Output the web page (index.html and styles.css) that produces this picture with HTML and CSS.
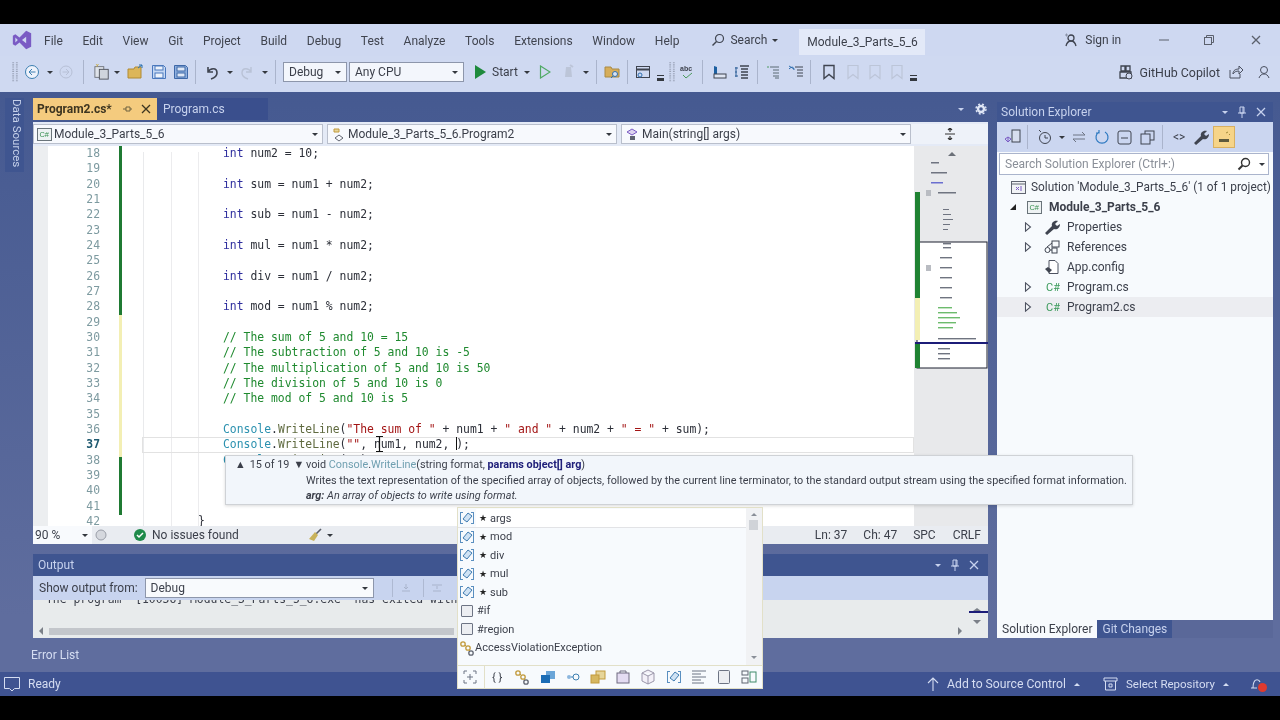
FILE: index.html
```html
<!DOCTYPE html>
<html lang="en">
<head>
    <meta charset="UTF-8">
    <title>Module_3_Parts_5_6 - Visual Studio</title>
    <link rel="stylesheet" href="styles.css">
</head>
<body>
    <!-- Shared toolbar icons -->
    <svg class="defs" width="0" height="0">
        <symbol id="i-grip" viewBox="0 0 8 24"><path d="M2 1v22M6 1v22" stroke="#9aa3b8" stroke-width="2" stroke-dasharray="1 1"/></symbol>
        <symbol id="i-back" viewBox="0 0 16 16"><circle cx="8" cy="8" r="6.5" fill="#eef2fb" stroke="#3c7fb1"/><path d="M11.5 8h-6M8 5L5 8l3 3" fill="none" stroke="#3c7fb1"/></symbol>
        <symbol id="i-fwd" viewBox="0 0 16 16"><circle cx="8" cy="8" r="6" fill="none" stroke="#b7c0d6"/><path d="M4.5 8h6M8 5l3 3-3 3" fill="none" stroke="#b7c0d6"/></symbol>
        <symbol id="i-new" viewBox="0 0 18 18"><rect x="1" y="3" width="10" height="12" fill="#dfe3ea" stroke="#6b6f78"/><rect x="6" y="6" width="10" height="11" fill="#cfd4dd" stroke="#4b4f58"/><path d="M2 0l2 2M5 0L3 3" stroke="#c8a93f"/></symbol>
        <symbol id="i-open" viewBox="0 0 18 16"><path d="M1 5h6l1-2h6v11H1z" fill="#dcb65a" stroke="#b08a34"/><path d="M11 4l4-3M15 1h-3M15 1v3" stroke="#2b70b0" fill="none"/></symbol>
        <symbol id="i-save" viewBox="0 0 16 16"><path d="M1.5 1.5h11l2 2v11h-13z" fill="#c6d8f3" stroke="#4a78bd"/><rect x="4" y="2" width="8" height="4" fill="#eef3fb" stroke="#4a78bd"/><rect x="4" y="9" width="8" height="5" fill="#eef3fb" stroke="#4a78bd"/></symbol>
        <symbol id="i-saveall" viewBox="0 0 16 16"><path d="M1.5 1.5h11l2 2v11h-13z" fill="#8fb0df" stroke="#3e68a8"/><rect x="4" y="3" width="8" height="4" fill="#dfe8f6" stroke="#3e68a8"/><rect x="4" y="9" width="8" height="4" fill="#dfe8f6" stroke="#3e68a8"/></symbol>
        <symbol id="i-undo" viewBox="0 0 16 16"><path d="M4 3v5h5M4 8c2-4 9-5 9 1 0 3-3 5-6 6" fill="none" stroke="#3f4450" stroke-width="1.6"/></symbol>
        <symbol id="i-redo" viewBox="0 0 16 16"><path d="M12 3v5H7M12 8c-2-4-9-5-9 1 0 3 3 5 6 6" fill="none" stroke="#b9c2d6" stroke-width="1.4"/></symbol>
        <symbol id="i-play" viewBox="0 0 12 14"><path d="M1 0l11 7-11 7z" fill="#1e8a3c"/></symbol>
        <symbol id="i-play-o" viewBox="0 0 12 14"><path d="M1.5 1l9.5 6-9.5 6z" fill="none" stroke="#4fa964" stroke-width="1.2"/></symbol>
        <symbol id="i-hammer" viewBox="0 0 16 16"><path d="M6 3h5l1 10H5z" fill="#bcc5d8"/><path d="M10 1l3 2" stroke="#bcc5d8" stroke-width="2"/></symbol>
        <symbol id="i-fsearch" viewBox="0 0 16 16"><path d="M1 3h6l1 2h7v8H1z" fill="#d6ad5a" stroke="#a98a45"/><circle cx="11" cy="10" r="2.5" fill="#d8e4f5" stroke="#2f6fb0"/><path d="M9 12l-2 2" stroke="#2f6fb0"/></symbol>
        <symbol id="i-window" viewBox="0 0 16 16"><rect x="1.5" y="2.5" width="13" height="11" fill="none" stroke="#3f4450"/><path d="M2 5.5h12" stroke="#3f4450" stroke-width="2"/><circle cx="5" cy="11" r="2" fill="none" stroke="#2f6fb0"/></symbol>
        <symbol id="i-abc" viewBox="0 0 16 16"><text x="1" y="7" font-family="Liberation Sans" font-size="7" font-weight="bold" fill="#3f4450">abc</text><path d="M4 11l3 3 6-5" fill="none" stroke="#4b9a5c"/></symbol>
        <symbol id="i-indent" viewBox="0 0 16 16"><path d="M3 2l3 1v10l-3 1z" fill="#1c5fa0"/><rect x="3" y="10" width="12" height="4" fill="#dfe5f2" stroke="#3f4450"/></symbol>
        <symbol id="i-cols" viewBox="0 0 16 16"><path d="M1 4h3M1 8h2M1 12h3M2 3v10" stroke="#2c5f97" fill="none"/><path d="M6 2h9M7 5h7M7 8h7M7 11h7M7 14h7" stroke="#3f4450" stroke-width="1.4"/></symbol>
        <symbol id="i-comment" viewBox="0 0 16 16"><path d="M4 3h9M7 6h6M7 9h6M7 12h6M9 14h4" stroke="#5b6a75" fill="none"/><path d="M1 3h2" stroke="#4f9a63"/></symbol>
        <symbol id="i-uncomment" viewBox="0 0 16 16"><path d="M7 3h8M9 6h6M9 9h6M9 12h6" stroke="#3f4450" fill="none"/><path d="M1 2l5 3M1 5c3-3 5-2 5 1" stroke="#2f6fb0" fill="none"/></symbol>
        <symbol id="i-mark" viewBox="0 0 14 16"><path d="M2 1.5h10v13l-5-4-5 4z" fill="none" stroke="#3f4450" stroke-width="1.4"/></symbol>
        <symbol id="i-mark-off" viewBox="0 0 14 16"><path d="M2 1.5h10v13l-5-4-5 4z" fill="none" stroke="#bcc5d8" stroke-width="1.2"/></symbol>
        <symbol id="i-field" viewBox="0 0 16 16"><path d="M1 2h3v1H2v10h2v1H1zM15 2h-3v1h2v10h-2v1h3z" fill="#5a8fc0"/><path d="M4 9l5-6 4 3-5 6z" fill="#cfe2f4" stroke="#3f7bb0"/></symbol>
        <symbol id="i-class" viewBox="0 0 16 16"><circle cx="4" cy="4" r="2.2" fill="none" stroke="#c19a3c" stroke-width="1.3"/><circle cx="9" cy="8" r="2.2" fill="none" stroke="#c19a3c" stroke-width="1.3"/><circle cx="12" cy="13" r="2.2" fill="none" stroke="#5f6470" stroke-width="1.3"/><path d="M6 5l2 2M10 10l1 1" stroke="#c19a3c"/></symbol>
        <symbol id="i-csproj" viewBox="0 0 16 14"><rect x=".5" y=".5" width="15" height="13" fill="#eef2f3" stroke="#5f6a70"/><text x="2.5" y="10" font-family="Liberation Sans" font-size="8" fill="#36904f">C#</text></symbol>
        <symbol id="i-wrench" viewBox="0 0 16 16"><path d="M1 14l7-7c-1-3 2-6 6-5l-3 3 2 2 3-2c0 4-3 6-6 5l-7 6z" fill="#3f4450"/></symbol>
        <symbol id="i-tri" viewBox="0 0 8 12"><path d="M1 1l6 5-6 5z" fill="#f7fafd" stroke="#4d5260" stroke-width="1.3"/></symbol>
        <symbol id="i-close" viewBox="0 0 10 10"><path d="M1 1l8 8M9 1L1 9" stroke="currentColor" stroke-width="1.3"/></symbol>
        <symbol id="i-pin" viewBox="0 0 10 12"><path d="M3 1h4v6H3zM1 7h8M5 7v5M6 1v6" fill="none" stroke="currentColor"/></symbol>
    </svg>

    <div class="window">
        <div class="titlebar">
            <svg class="vs-logo" width="20" height="20" viewBox="0 0 24 24"><path fill="#7a5bc4" fill-rule="evenodd" d="M17 1l6 3v16l-6 3-8-8-5 4-3-2V7l3-2 5 4zM17 8l-5 4 5 4zM4 9v6l3-3z"/></svg>
            <div class="menu">
                <span>File</span><span>Edit</span><span>View</span><span>Git</span><span>Project</span><span>Build</span><span>Debug</span><span>Test</span><span>Analyze</span><span>Tools</span><span>Extensions</span><span>Window</span><span>Help</span>
            </div>
            <div class="title-search">
                <svg width="14" height="14" viewBox="0 0 14 14"><circle cx="8.5" cy="5.5" r="4" fill="none" stroke="#3f4450" stroke-width="1.2"/><path d="M5.5 8.5L1.5 12.5" stroke="#3f4450" stroke-width="1.4"/></svg>
                <span>Search</span>
                <i class="caret-down"></i>
            </div>
            <div class="solution-name">Module_3_Parts_5_6</div>
            <div class="sign-in">
                <svg width="14" height="14" viewBox="0 0 14 14"><circle cx="7" cy="5" r="3" fill="none" stroke="#3f4450" stroke-width="1.3"/><path d="M2 13c1-4 3-5 5-5s4 1 5 5" fill="none" stroke="#3f4450" stroke-width="1.3"/><path d="M1 2h3M2.5 .5v3" stroke="#8a93a8"/></svg>
                <span>Sign in</span>
            </div>
            <div class="window-buttons">
                <svg width="10" height="10" viewBox="0 0 10 10"><path d="M0 5h10" stroke="#5b606c"/></svg>
                <svg width="10" height="10" viewBox="0 0 10 10"><rect x=".5" y="2.5" width="7" height="7" fill="none" stroke="#5b606c"/><path d="M2.5 2.5v-2h7v7h-2" fill="none" stroke="#5b606c"/></svg>
                <svg class="win-close" width="10" height="10"><use href="#i-close"/></svg>
            </div>
        </div>

        <div class="toolbar">
            <svg class="ti-grip m-grip"><use href="#i-grip"/></svg>
            <svg class="ti wide m4"><use href="#i-back"/></svg>
            <i class="caret-down m6"></i>
            <svg class="ti m5"><use href="#i-fwd"/></svg>
            <i class="sep m9"></i>
            <svg class="ti wide m9"><use href="#i-new"/></svg>
            <i class="caret-down m3"></i>
            <svg class="ti wide m7"><use href="#i-open"/></svg>
            <svg class="ti m6"><use href="#i-save"/></svg>
            <svg class="ti m6"><use href="#i-saveall"/></svg>
            <i class="sep m6"></i>
            <svg class="ti m8"><use href="#i-undo"/></svg>
            <i class="caret-down m7"></i>
            <svg class="ti m6"><use href="#i-redo"/></svg>
            <i class="caret-down m7"></i>
            <i class="sep m7"></i>
            <div class="combo combo-debug m7"><span>Debug</span><i class="caret-down"></i></div>
            <div class="combo combo-cpu m2"><span>Any CPU</span><i class="caret-down"></i></div>
            <svg class="ti-play m10"><use href="#i-play"/></svg>
            <span class="start-label m6">Start</span>
            <i class="caret-down m6"></i>
            <svg class="ti-play m9"><use href="#i-play-o"/></svg>
            <svg class="ti m9"><use href="#i-hammer"/></svg>
            <i class="caret-down m7"></i>
            <i class="sep m7"></i>
            <svg class="ti m7"><use href="#i-fsearch"/></svg>
            <i class="sep m7"></i>
            <svg class="ti m7"><use href="#i-window"/></svg>
            <i class="caret-menu m6"></i>
            <svg class="ti-grip m4"><use href="#i-grip"/></svg>
            <svg class="ti m3"><use href="#i-abc"/></svg>
            <i class="sep m7"></i>
            <svg class="ti m8"><use href="#i-indent"/></svg>
            <svg class="ti m7"><use href="#i-cols"/></svg>
            <i class="sep m7"></i>
            <svg class="ti m8"><use href="#i-comment"/></svg>
            <svg class="ti m6"><use href="#i-uncomment"/></svg>
            <i class="sep m6"></i>
            <svg class="ti m10"><use href="#i-mark"/></svg>
            <svg class="ti m8"><use href="#i-mark-off"/></svg>
            <svg class="ti m6"><use href="#i-mark-off"/></svg>
            <svg class="ti m6"><use href="#i-mark-off"/></svg>
            <i class="caret-menu m5"></i>
            <div class="copilot">
                <svg width="16" height="16" viewBox="0 0 16 16"><path d="M3 2h4v5H3zM8 2h4v5H8zM2 8h11v6H2z" fill="none" stroke="#3f4450" stroke-width="1.3"/><circle cx="11" cy="12" r="3" fill="#cfd9f1" stroke="#3f4450"/></svg>
                <span>GitHub Copilot</span>
                <svg class="copilot-share" width="14" height="14" viewBox="0 0 14 14"><path d="M1 5v8h10V9M4 9c0-4 3-5 6-5V1l4 4-4 4V6C7 6 5 7 4 9z" fill="none" stroke="#4a5060"/></svg>
                <svg class="copilot-feedback" width="14" height="14" viewBox="0 0 14 14"><circle cx="7" cy="5" r="3.5" fill="none" stroke="#4a5060"/><path d="M2 13c1-3 3-4 5-4s4 1 5 4" fill="none" stroke="#4a5060"/></svg>
            </div>
        </div>

        <div class="workspace">
            <div class="side-strip"><span class="side-tab">Data Sources</span></div>

            <div class="center">
                <div class="doc-tabs">
                    <div class="doc-tab active">
                        <span>Program2.cs*</span>
                        <svg class="tab-pin" width="10" height="10" viewBox="0 0 10 10"><path d="M3 3h4v4H3zM0 5h3M7 5h2" fill="none" stroke="#6e6340"/></svg>
                        <svg class="tab-close" width="10" height="10"><use href="#i-close"/></svg>
                    </div>
                    <div class="doc-tab">Program.cs</div>
                    <div class="tab-tools">
                        <i class="caret-down light"></i>
                        <svg width="12" height="12" viewBox="0 0 12 12"><circle cx="6" cy="6" r="3" fill="none" stroke="#dfe6f6" stroke-width="2.4"/><circle cx="6" cy="6" r="5" fill="none" stroke="#dfe6f6" stroke-width="1.4" stroke-dasharray="2 2"/></svg>
                    </div>
                </div>

                <div class="nav-bar">
                    <div class="nav-combo">
                        <svg width="15" height="13"><use href="#i-csproj"/></svg>
                        <span>Module_3_Parts_5_6</span>
                        <i class="caret-down"></i>
                    </div>
                    <div class="nav-combo">
                        <svg width="15" height="15" viewBox="0 0 15 15"><path d="M8 8l4 3-4 3-4-3z" fill="none" stroke="#5f6470"/><path d="M3 2h5v3H3z" fill="#e6d59a" stroke="#c19a3c"/></svg>
                        <span>Module_3_Parts_5_6.Program2</span>
                        <i class="caret-down"></i>
                    </div>
                    <div class="nav-combo">
                        <svg width="15" height="15" viewBox="0 0 15 15"><path d="M7 2l5 3-5 3-5-3z" fill="#dcd3ee" stroke="#7a5bc4"/><rect x="5" y="9" width="5" height="4" fill="#5f6470"/></svg>
                        <span>Main(string[] args)</span>
                        <i class="caret-down"></i>
                    </div>
                    <div class="nav-split">
                        <svg width="12" height="12" viewBox="0 0 12 12"><path d="M1 6h10M6 0v4M6 8v4M4 2l2-2 2 2M4 10l2 2 2-2" fill="none" stroke="#333" stroke-width="1.2"/></svg>
                    </div>
                </div>

                <div class="editor">
                    <div class="gutter-left"></div>
                    <div class="line-numbers">
                        <div>18</div><div>19</div><div>20</div><div>21</div><div>22</div><div>23</div><div>24</div><div>25</div><div>26</div><div>27</div><div>28</div><div>29</div><div>30</div><div>31</div><div>32</div><div>33</div><div>34</div><div>35</div><div>36</div><div class="current">37</div><div>38</div><div>39</div><div>40</div><div>41</div><div>42</div>
                    </div>
                    <div class="change-bar"><i class="saved-a"></i><i class="unsaved"></i><i class="saved-b"></i></div>
                    <div class="code">
                        <div class="line"><b>int</b> num2 = 10;</div>
                        <div class="line"></div>
                        <div class="line"><b>int</b> sum = num1 + num2;</div>
                        <div class="line"></div>
                        <div class="line"><b>int</b> sub = num1 - num2;</div>
                        <div class="line"></div>
                        <div class="line"><b>int</b> mul = num1 * num2;</div>
                        <div class="line"></div>
                        <div class="line"><b>int</b> div = num1 / num2;</div>
                        <div class="line"></div>
                        <div class="line"><b>int</b> mod = num1 % num2;</div>
                        <div class="line"></div>
                        <div class="line note">// The sum of 5 and 10 = 15</div>
                        <div class="line note">// The subtraction of 5 and 10 is -5</div>
                        <div class="line note">// The multiplication of 5 and 10 is 50</div>
                        <div class="line note">// The division of 5 and 10 is 0</div>
                        <div class="line note">// The mod of 5 and 10 is 5</div>
                        <div class="line"></div>
                        <div class="line"><u>Console</u>.<em>WriteLine</em>(<s>"The sum of "</s> + num1 + <s>" and "</s> + num2 + <s>" = "</s> + sum);</div>
                        <div class="line current"><u>Console</u>.<em>WriteLine</em>(<s>""</s>, num1, num2, <span class="text-caret"></span>);<svg class="ibeam" width="9" height="16" viewBox="0 0 9 16"><path d="M1 .5h7M1 15.5h7M4.5 1v14" stroke="#111" stroke-width="1.2" fill="none"/></svg></div>
                        <div class="line"><u>Console</u>.<em>WriteLine</em>(<s>""</s>);</div>
                        <div class="line"></div>
                        <div class="line"></div>
                        <div class="line"></div>
                        <div class="line dedent">}</div>
                    </div>
                    <svg class="code-map" width="74" height="380" viewBox="0 0 74 380">
                        <rect width="74" height="380" fill="#e8e9eb"/>
                        <rect x="3" y="96" width="70" height="126" fill="#fff" stroke="#1b1f2e"/>
                        <rect x="1" y="46" width="5" height="106" fill="#1f8232"/>
                        <rect x="1" y="152" width="5" height="42" fill="#f3efb4"/>
                        <rect x="1" y="197" width="5" height="25" fill="#1f8232"/>
                        <path d="M34 10l4-4 4 4z" fill="#6b7078"/>
                        <g fill="#6f7480">
                            <rect x="17" y="16" width="8" height="1.5"/>
                            <rect x="17" y="26" width="16" height="1.5"/>
                            <rect x="24" y="46" width="18" height="1.5"/>
                            <rect x="12" y="44" width="5" height="6" fill="#b9bcc2"/>
                            <rect x="29" y="63" width="6" height="1"/>
                            <rect x="29" y="68" width="8" height="1"/>
                            <rect x="29" y="73" width="10" height="1"/>
                            <rect x="29" y="78" width="7" height="1"/>
                            <rect x="29" y="83" width="5" height="1"/>
                            <rect x="29" y="97" width="8" height="1.4"/>
                            <rect x="29" y="101" width="8" height="1.4"/>
                            <rect x="26" y="111" width="12" height="1.4"/>
                            <rect x="26" y="121" width="12" height="1.4"/>
                            <rect x="12" y="119" width="5" height="6" fill="#b9bcc2"/>
                            <rect x="26" y="131" width="12" height="1.4"/>
                            <rect x="26" y="141" width="12" height="1.4"/>
                            <rect x="26" y="151" width="12" height="1.4"/>
                            <rect x="24" y="192" width="38" height="1.4"/>
                            <rect x="24" y="202" width="12" height="1.4"/>
                            <rect x="24" y="207" width="12" height="1.4"/>
                            <rect x="24" y="212" width="12" height="1.4"/>
                        </g>
                        <rect x="17" y="36" width="12" height="1.5" fill="#6a6fd0"/>
                        <g fill="#6dbb6d">
                            <rect x="24" y="161" width="14" height="1.4"/>
                            <rect x="24" y="166" width="19" height="1.4"/>
                            <rect x="24" y="171" width="22" height="1.4"/>
                            <rect x="24" y="176" width="18" height="1.4"/>
                            <rect x="24" y="181" width="15" height="1.4"/>
                        </g>
                        <rect x="1" y="196" width="73" height="2" fill="#1c1c78"/>
                    </svg>
                </div>

                <div class="editor-status">
                    <div class="zoom-combo"><span>90 %</span><i class="caret-down"></i></div>
                    <svg class="status-tool" width="14" height="14" viewBox="0 0 14 14"><circle cx="7" cy="7" r="5" fill="#d5d8de" stroke="#9a9ea8"/></svg>
                    <svg class="status-ok" width="12" height="12" viewBox="0 0 12 12"><circle cx="6" cy="6" r="6" fill="#1e8a4a"/><path d="M3 6l2 2 4-4" fill="none" stroke="#fff" stroke-width="1.5"/></svg>
                    <span class="status-msg">No issues found</span>
                    <svg class="status-broom" width="14" height="14" viewBox="0 0 14 14"><path d="M13 1L8 6" stroke="#5a5f6a" stroke-width="1.6"/><path d="M7 4l3 3-4 6-5-2z" fill="#c8b25a"/></svg>
                    <i class="caret-down m5"></i>
                    <span class="status-pos first">Ln: 37</span>
                    <span class="status-pos second">Ch: 47</span>
                    <span class="status-pos third">SPC</span>
                    <span class="status-pos fourth">CRLF</span>
                </div>

                <div class="output">
                    <div class="pane-title">
                        <span>Output</span>
                        <div class="pane-tools">
                            <i class="caret-down light"></i>
                            <svg width="10" height="12"><use href="#i-pin"/></svg>
                            <svg width="10" height="10"><use href="#i-close"/></svg>
                        </div>
                    </div>
                    <div class="output-bar">
                        <span>Show output from:</span>
                        <div class="combo combo-output"><span>Debug</span><i class="caret-down"></i></div>
                        <i class="sep faint"></i>
                        <svg class="faint-tool" width="14" height="14" viewBox="0 0 14 14"><path d="M3 10h8M7 3v5M5 6l2 2 2-2" fill="none" stroke="#a9b4cc"/></svg>
                        <i class="sep faint"></i>
                        <svg class="faint-tool" width="14" height="14" viewBox="0 0 14 14"><path d="M2 4h10M3 10h8M7 5v3" fill="none" stroke="#a9b4cc"/></svg>
                    </div>
                    <div class="output-body">
                        <div class="output-text">The program '[10036] Module_3_Parts_5_6.exe' has exited with code 0 (0x0).</div>
                        <div class="output-scroll">
                            <i class="arrow-left"></i>
                            <i class="output-track"></i>
                            <i class="arrow-right"></i>
                        </div>
                        <i class="marker-up"></i>
                        <i class="output-marker"></i>
                        <i class="marker-down"></i>
                    </div>
                </div>

                <div class="error-tab">Error List</div>
            </div>

            <div class="solution">
                <div class="sol-title">
                    <span>Solution Explorer</span>
                    <div class="pane-tools">
                        <i class="caret-down light"></i>
                        <svg width="10" height="12"><use href="#i-pin"/></svg>
                        <svg width="10" height="10"><use href="#i-close"/></svg>
                    </div>
                </div>
                <div class="sol-toolbar">
                    <svg width="18" height="16" viewBox="0 0 18 16"><path d="M1 10l3-2v5zM4 8l3 2-3 3" fill="none" stroke="#7a5bc4"/><rect x="8" y="1" width="8" height="12" fill="#d7deef" stroke="#3f4450"/></svg>
                    <i class="sep s-sep1"></i>
                    <svg class="s-clock" width="16" height="16" viewBox="0 0 16 16"><circle cx="8" cy="9" r="5.5" fill="none" stroke="#3f4450"/><path d="M8 6v3h3M2 1l2 2" fill="none" stroke="#3f4450"/></svg>
                    <i class="caret-down s-caret"></i>
                    <svg class="s-sync" width="14" height="14" viewBox="0 0 14 14"><path d="M1 5h12M10 2l3 3M13 9H1M4 12L1 9" fill="none" stroke="#6d7484"/></svg>
                    <svg class="s-refresh" width="16" height="16" viewBox="0 0 16 16"><path d="M5 3a6 6 0 1 0 6 0M5 1v3H2" fill="none" stroke="#2c78c0" stroke-width="1.2"/></svg>
                    <svg class="s-collapse" width="15" height="15" viewBox="0 0 15 15"><rect x="1" y="1" width="13" height="13" rx="2" fill="none" stroke="#3f4450"/><path d="M4 8h7" stroke="#3f4450"/></svg>
                    <svg class="s-copy" width="15" height="15" viewBox="0 0 15 15"><rect x="5" y="1" width="9" height="9" fill="none" stroke="#3f4450"/><rect x="1" y="4" width="9" height="10" fill="#cbd6f0" stroke="#3f4450"/></svg>
                    <i class="sep s-sep2"></i>
                    <span class="s-code">&lt;&gt;</span>
                    <svg class="s-wrench" width="16" height="16"><use href="#i-wrench"/></svg>
                    <div class="s-active"><svg width="14" height="12" viewBox="0 0 14 12"><path d="M2 8h10v3H2z" fill="#5f5a3c"/><path d="M9 2l2-1M12 4l1-1" stroke="#a28a3a"/></svg></div>
                </div>
                <div class="sol-search">
                    <span>Search Solution Explorer (Ctrl+:)</span>
                    <svg width="14" height="14" viewBox="0 0 14 14"><circle cx="8.5" cy="5.5" r="4" fill="none" stroke="#333" stroke-width="1.4"/><path d="M5.5 8.5L1.5 12.5" stroke="#333" stroke-width="2"/></svg>
                    <i class="caret-down search-caret"></i>
                </div>
                <div class="sol-tree">
                    <div class="tree-row root">
                        <svg width="15" height="15" viewBox="0 0 15 15"><rect x=".5" y="1.5" width="14" height="12" fill="#f1f3f6" stroke="#5f6470"/><path d="M1 4h13" stroke="#5f6470"/><path d="M5 7l3 3M8 7l-3 3M10 6v5" stroke="#7a5bc4"/></svg>
                        <span>Solution 'Module_3_Parts_5_6' (1 of 1 project)</span>
                    </div>
                    <div class="tree-row project">
                        <svg class="exp" width="8" height="8" viewBox="0 0 8 8"><path d="M7 1v6H1z" fill="#222"/></svg>
                        <svg width="15" height="13"><use href="#i-csproj"/></svg>
                        <b>Module_3_Parts_5_6</b>
                    </div>
                    <div class="tree-row child">
                        <svg class="exp" width="8" height="10"><use href="#i-tri"/></svg>
                        <svg width="16" height="16"><use href="#i-wrench"/></svg>
                        <span>Properties</span>
                    </div>
                    <div class="tree-row child">
                        <svg class="exp" width="8" height="10"><use href="#i-tri"/></svg>
                        <svg width="16" height="14" viewBox="0 0 16 14"><rect x="8" y="1" width="7" height="6" fill="none" stroke="#3f4450"/><circle cx="3.5" cy="10" r="2.5" fill="none" stroke="#3f4450"/><rect x="8" y="8" width="5" height="5" fill="none" stroke="#3f4450"/><path d="M3 7l5-4M6 10h2" stroke="#3f4450"/></svg>
                        <span>References</span>
                    </div>
                    <div class="tree-row child">
                        <span class="exp-none"></span>
                        <svg width="16" height="16" viewBox="0 0 16 16"><path d="M5 1.5h6l3 3v10H5z" fill="#fff" stroke="#4d5260"/><path d="M1 10l4 4 3-3-4-3z" fill="#3f4450"/></svg>
                        <span>App.config</span>
                    </div>
                    <div class="tree-row child">
                        <svg class="exp" width="8" height="10"><use href="#i-tri"/></svg>
                        <span class="cs-icon">C#</span>
                        <span>Program.cs</span>
                    </div>
                    <div class="tree-row child selected">
                        <svg class="exp" width="8" height="10"><use href="#i-tri"/></svg>
                        <span class="cs-icon">C#</span>
                        <span>Program2.cs</span>
                    </div>
                </div>
                <div class="sol-tabs">
                    <div class="sol-tab active">Solution Explorer</div>
                    <div class="sol-tab">Git Changes</div>
                </div>
            </div>
        </div>

        <div class="statusbar">
            <svg width="18" height="18" viewBox="0 0 18 18"><path d="M1.5 2.5h15v11h-5l-2.5 2.5-2.5-2.5h-5z" fill="none" stroke="#d5ddf2"/></svg>
            <span class="status-ready">Ready</span>
            <div class="status-right">
                <svg width="12" height="14" viewBox="0 0 12 14"><path d="M6 14V1M1 6l5-5 5 5" fill="none" stroke="#d5ddf2" stroke-width="1.1"/></svg>
                <span class="status-source">Add to Source Control</span>
                <i class="caret-up"></i>
                <svg class="status-repo" width="15" height="14" viewBox="0 0 15 14"><path d="M1 1h13v3H1zM2.5 4v9h10V4M6 7v3h3V7z" fill="none" stroke="#d5ddf2"/></svg>
                <span class="status-select">Select Repository</span>
                <i class="caret-up"></i>
                <div class="status-bell">
                    <svg width="14" height="15" viewBox="0 0 14 15"><path d="M3 11c0-2 0-4 1-6 1-3 5-3 6 0" fill="none" stroke="#d5ddf2" stroke-width="1.1"/><path d="M1 11h6" stroke="#d5ddf2"/></svg>
                    <i class="bell-badge"></i>
                </div>
            </div>
        </div>

        <!-- Signature help popup -->
        <div class="signature">
            <div class="sig-counter">
                <span>▲</span><span>15 of 19</span><span>▼</span>
            </div>
            <div class="sig-text">
                <div>void <span class="sig-type">Console</span>.<span class="sig-type">WriteLine</span>(string format, <strong class="sig-param">params object[] arg</strong>)</div>
                <div>Writes the text representation of the specified array of objects, followed by the current line terminator, to the standard output stream using the specified format information.</div>
                <div class="sig-arg"><strong>arg:</strong> An array of objects to write using format.</div>
            </div>
        </div>

        <!-- Completion list popup -->
        <div class="completion">
            <div class="completion-main">
                <div class="completion-list">
                    <div class="comp-item first"><svg width="16" height="16"><use href="#i-field"/></svg><span class="star">★</span><span class="comp-label boxed">args</span></div>
                    <div class="comp-item"><svg width="16" height="16"><use href="#i-field"/></svg><span class="star">★</span><span>mod</span></div>
                    <div class="comp-item"><svg width="16" height="16"><use href="#i-field"/></svg><span class="star">★</span><span>div</span></div>
                    <div class="comp-item"><svg width="16" height="16"><use href="#i-field"/></svg><span class="star">★</span><span>mul</span></div>
                    <div class="comp-item"><svg width="16" height="16"><use href="#i-field"/></svg><span class="star">★</span><span>sub</span></div>
                    <div class="comp-item"><i class="snippet"></i><span>#if</span></div>
                    <div class="comp-item"><i class="snippet"></i><span>#region</span></div>
                    <div class="comp-item"><svg width="16" height="16"><use href="#i-class"/></svg><span>AccessViolationException</span></div>
                </div>
                <div class="completion-scroll">
                    <i class="scroll-up"></i>
                    <i class="scroll-thumb"></i>
                    <i class="scroll-down"></i>
                </div>
            </div>
            <div class="completion-filters">
                <svg class="filter-expand" width="14" height="14" viewBox="0 0 14 14"><path d="M1 4V1h3M10 1h3v3M13 10v3h-3M4 13H1v-3M7 4v6M4 7h6" fill="none" stroke="#6d7484"/></svg>
                <span class="filter-brace">{ }</span>
                <svg width="16" height="16"><use href="#i-class"/></svg>
                <svg width="16" height="16" viewBox="0 0 16 16"><rect x="6" y="2" width="9" height="8" fill="#6aa5d8"/><rect x="1" y="6" width="9" height="8" fill="#1c6db5"/></svg>
                <svg width="16" height="16" viewBox="0 0 16 16"><circle cx="4" cy="8" r="2" fill="#8cb6de"/><circle cx="11" cy="8" r="3" fill="none" stroke="#3c7fb1"/><path d="M6 8h2" stroke="#3c7fb1"/></svg>
                <svg width="16" height="16" viewBox="0 0 16 16"><rect x="6" y="2" width="9" height="8" fill="#e6d59a" stroke="#c19a3c"/><rect x="1" y="6" width="8" height="8" fill="#d6b760" stroke="#c19a3c"/></svg>
                <svg width="16" height="16" viewBox="0 0 16 16"><rect x="2" y="4" width="12" height="10" fill="#e4dcf2" stroke="#6f6a80"/><path d="M5 4V2h6v2" fill="none" stroke="#6f6a80"/></svg>
                <svg width="16" height="16" viewBox="0 0 16 16"><path d="M8 1l6 3v8l-6 3-6-3V4zM2 4l6 3 6-3M8 7v8" fill="#f3f0f8" stroke="#9a96aa"/></svg>
                <svg width="16" height="16"><use href="#i-field"/></svg>
                <svg width="16" height="16" viewBox="0 0 16 16"><path d="M1 2h14M1 5h9M1 8h14M1 11h9M1 14h12" stroke="#6d7484"/></svg>
                <svg width="16" height="16" viewBox="0 0 16 16"><rect x="2.5" y="1.5" width="11" height="13" rx="1" fill="#eceef2" stroke="#6d7484"/></svg>
                <svg width="16" height="16" viewBox="0 0 16 16"><rect x="1" y="2" width="6" height="4" fill="none" stroke="#5f6470"/><rect x="1" y="9" width="6" height="5" fill="none" stroke="#5f6470"/><rect x="9" y="3" width="6" height="10" fill="none" stroke="#3f8a6a"/></svg>
            </div>
        </div>
    </div>
</body>
</html>
```

FILE: styles.css
```css
* {
    box-sizing: border-box;
}

body {
    margin: 0;
    padding: 24px 0;
    height: 720px;
    overflow: hidden;
    background-color: #000000;
    font-family: Roboto, "Liberation Sans", sans-serif;
    font-size: 12px;
    color: #3b3f4a;
}

.defs {
    position: absolute;
}

.window {
    position: relative;
    display: flex;
    flex-direction: column;
    height: 672px;
    overflow: hidden;
    background: linear-gradient(#42578f, #5f6d9e 88%);
    white-space: nowrap;
    filter: blur(0.5px);
}

i {
    display: block;
    flex: none;
}

svg {
    flex: none;
}

/* small carets */
.caret-down, .caret-up {
    width: 0;
    height: 0;
    border-left: 3px solid transparent;
    border-right: 3px solid transparent;
}

.caret-down {
    border-top: 3px solid #34383f;
}

.caret-up {
    border-bottom: 3px solid #d5ddf2;
}

.caret-down.light {
    border-top-color: #c7d2ee;
}

.caret-menu {
    width: 7px;
    height: 6px;
    margin-top: 12px;
    border-top: 1px solid #34383f;
    border-bottom: 3px solid #34383f;
}

/* title bar */
.titlebar {
    display: flex;
    align-items: center;
    flex: none;
    height: 32px;
    padding-left: 12px;
    background-color: #ced8f1;
}

.titlebar > * {
    flex: none;
}

.menu {
    display: flex;
    gap: 19.7px;
    margin-left: 12px;
    margin-top: 2px;
    color: #40444f;
}

.title-search {
    display: flex;
    align-items: center;
    gap: 5px;
    margin-left: 32px;
}

.solution-name {
    display: flex;
    align-items: center;
    width: 126px;
    height: 26px;
    margin-left: 21px;
    margin-top: 4px;
    padding-left: 8px;
    background-color: #e3e9f8;
}

.sign-in {
    display: flex;
    align-items: center;
    gap: 7px;
    margin-left: 139px;
}

.window-buttons {
    display: flex;
    align-items: center;
    gap: 35px;
    margin-left: 38px;
}

.win-close {
    color: #5b606c;
    margin-left: 2px;
}

/* main toolbar */
.toolbar {
    display: flex;
    align-items: center;
    flex: none;
    height: 36px;
    padding-bottom: 4px;
    background-color: #cfd9f1;
}

.toolbar > * {
    flex: none;
}

.ti {
    width: 16px;
    height: 16px;
}

.ti.wide {
    width: 18px;
}

.ti-grip {
    width: 8px;
    height: 22px;
}

.ti-play {
    width: 12px;
    height: 14px;
}

.sep {
    width: 1px;
    height: 24px;
    background-color: #aab4cc;
}

.sep.faint {
    height: 18px;
    margin-left: 10px;
    background-color: #aeb9d2;
}

.output-bar .combo + .sep.faint {
    margin-left: 18px;
}

.faint-tool {
    margin-left: 6px;
}

.m-grip { margin-left: 11px; }
.m2 { margin-left: 2px; }
.m3 { margin-left: 3px; }
.m4 { margin-left: 4px; }
.m5 { margin-left: 5px; }
.m6 { margin-left: 6px; }
.m7 { margin-left: 7px; }
.m8 { margin-left: 8px; }
.m9 { margin-left: 9px; }
.m10 { margin-left: 10px; }

.combo {
    display: flex;
    align-items: center;
    justify-content: space-between;
    height: 20px;
    padding: 0 5px;
    background-color: #f3f6fc;
    border: 1px solid #8d96ab;
}

.combo-debug {
    width: 64px;
}

.combo-cpu {
    width: 115px;
}

.copilot {
    display: flex;
    align-items: center;
    gap: 6px;
    margin-left: auto;
    padding-right: 9px;
    font-size: 12.4px;
}

.copilot-share {
    margin-left: 3px;
}

.copilot-feedback {
    margin-left: 8px;
}

/* workspace */
.workspace {
    display: flex;
    flex: 1;
    min-height: 0;
}

.side-strip {
    flex: none;
    width: 33px;
    padding-top: 6px;
}

.side-tab {
    display: block;
    width: 19px;
    height: 74px;
    padding: 1px 0 0 3px;
    margin-left: 5px;
    background-color: #3f5590;
    color: #c5d0ea;
    font-size: 11.5px;
    writing-mode: vertical-rl;
}

.center {
    flex: none;
    width: 955px;
    padding-top: 6px;
}

.doc-tabs {
    display: flex;
    height: 22px;
}

.doc-tab {
    display: flex;
    align-items: center;
    width: 111px;
    padding-left: 6px;
    background-color: #3a4f8d;
    color: #c7d2ee;
}

.doc-tab.active {
    width: 124px;
    padding-left: 4px;
    background-color: #f4cb7e;
    color: #3d3520;
    font-weight: bold;
}

.tab-pin {
    margin-left: 11px;
}

.tab-close {
    margin-left: 8px;
}

.tab-tools {
    display: flex;
    align-items: center;
    gap: 11px;
    margin-left: auto;
    padding-right: 1px;
}

.nav-bar {
    display: flex;
    gap: 4px;
    height: 24px;
    margin-top: 2px;
    padding-top: 2px;
    background-color: #e4eaf6;
}

.nav-combo {
    display: flex;
    align-items: center;
    gap: 2px;
    flex: none;
    width: 290px;
    height: 20px;
    padding: 0 3px;
    background-color: #f7f9fd;
    border: 1px solid #b9bfcc;
}

.nav-combo .caret-down {
    margin-left: auto;
    margin-right: 1px;
}

.nav-split {
    display: flex;
    align-items: center;
    justify-content: center;
    flex: 1;
    margin-left: -4px;
    height: 20px;
    background-color: #eef2f9;
}

/* code editor */
.editor {
    display: flex;
    height: 380px;
    overflow: hidden;
    background-color: #ffffff;
    font-family: "DejaVu Sans Mono", monospace;
    font-size: 11.4px;
    line-height: 15.33px;
}

.gutter-left {
    flex: none;
    width: 15px;
    background-color: #eceef0;
}

.line-numbers {
    flex: none;
    width: 52px;
    text-align: right;
    color: #7d9aa0;
}

.line-numbers .current {
    color: #1f5a70;
    font-weight: bold;
}

.change-bar {
    display: flex;
    flex: none;
    flex-direction: column;
    width: 3px;
    margin-left: 19px;
}

.change-bar i {
    width: 3px;
}

.saved-a {
    height: 169px;
    background-color: #1f7a33;
}

.unsaved {
    height: 142px;
    background-color: #f3efb4;
}

.saved-b {
    height: 58px;
    background-color: #1f7a33;
}

.code {
    flex: 1;
    min-width: 0;
    background:
        linear-gradient(#e9eaec, #e9eaec) 21px 6px / 1px 100% no-repeat,
        linear-gradient(#ececee, #ececee) 49px 6px / 1px 100% no-repeat,
        linear-gradient(#ececee, #ececee) 76px 6px / 1px 100% no-repeat;
    color: #2c2f38;
}

.line {
    position: relative;
    height: 15.33px;
    padding-left: 101px;
    white-space: pre;
}

.line b {
    font-weight: normal;
    color: #2f2f9e;
}

.line u {
    text-decoration: none;
    color: #2b91af;
}

.line em {
    font-style: normal;
    color: #5f6a3f;
}

.line s {
    text-decoration: none;
    color: #a31515;
}

.line.note {
    color: #1f8a2f;
}

.line.current {
    margin-left: 20px;
    padding-left: 81px;
    box-shadow: inset 0 0 0 1px #e2e2e2;
}

.line.dedent {
    padding-left: 76px;
}

.text-caret {
    display: inline-block;
    width: 1px;
    height: 13px;
    margin-right: -1px;
    vertical-align: -2px;
    background-color: #111111;
}

.ibeam {
    position: absolute;
    left: 233px;
    top: -1px;
}

.code-map {
    display: block;
}

.editor-status {
    display: flex;
    align-items: center;
    height: 18px;
    background-color: #e9ecf1;
}

.editor-status > * {
    flex: none;
}

.zoom-combo {
    display: flex;
    align-items: center;
    justify-content: space-between;
    width: 59px;
    height: 18px;
    padding: 0 4px 0 2px;
    background-color: #f8fafd;
}

.status-tool {
    margin-left: 2px;
}

.status-ok {
    margin-left: 26px;
}

.status-msg {
    margin-left: 6px;
}

.status-broom {
    margin-left: 69px;
}

.status-pos.first {
    margin-left: 482px;
}

.status-pos.second {
    margin-left: 16px;
}

.status-pos.third {
    margin-left: 16px;
}

.status-pos.fourth {
    margin-left: 17px;
}

/* output pane */
.output {
    height: 84px;
    margin-top: 10px;
}

.pane-title {
    display: flex;
    align-items: center;
    justify-content: space-between;
    height: 22px;
    padding: 0 9px 0 5px;
    background-color: #3f5590;
    color: #c7d2ee;
}

.pane-tools {
    display: flex;
    align-items: center;
    gap: 9px;
    color: #c7d2ee;
}

.output-bar {
    display: flex;
    align-items: center;
    height: 24px;
    padding-left: 6px;
    background-color: #c8d4ef;
}

.combo-output {
    width: 229px;
    margin-left: 7px;
    background-color: #f8fafd;
}

.output-body {
    position: relative;
    height: 38px;
    overflow: hidden;
    background-color: #e8ebec;
}

.output-text {
    width: 425px;
    height: 15px;
    margin-top: -8px;
    padding-left: 13px;
    overflow: hidden;
    font-family: "DejaVu Sans Mono", monospace;
    font-size: 11.4px;
    line-height: 15px;
}

.output-scroll {
    display: flex;
    align-items: center;
    margin-top: 20px;
    padding-left: 6px;
}

.arrow-left {
    width: 0;
    height: 0;
    border-top: 4px solid transparent;
    border-bottom: 4px solid transparent;
    border-right: 4px solid #7b8088;
}

.arrow-right {
    width: 0;
    height: 0;
    margin-left: 504px;
    border-top: 4px solid transparent;
    border-bottom: 4px solid transparent;
    border-left: 4px solid #7b8088;
}

.output-track {
    width: 405px;
    height: 7px;
    margin-left: 6px;
    background-color: #c3c6cb;
}

.output-marker {
    position: absolute;
    right: 0;
    top: 11px;
    width: 19px;
    height: 2px;
    background-color: #1c1c78;
}

.marker-up, .marker-down {
    position: absolute;
    right: 7px;
    width: 0;
    height: 0;
    border-left: 4px solid transparent;
    border-right: 4px solid transparent;
}

.marker-up {
    top: 8px;
    border-bottom: 3px solid #7b8088;
}

.marker-down {
    top: 20px;
    border-top: 4px solid #7b8088;
}

.error-tab {
    width: 60px;
    height: 18px;
    margin-top: 8px;
    margin-left: -2px;
    color: #d5ddf2;
    line-height: 18px;
}

/* solution explorer */
.solution {
    display: flex;
    flex: none;
    flex-direction: column;
    width: 276px;
    height: 536px;
    margin-top: 10px;
    margin-left: 9px;
    background-color: #f7fafd;
}

.sol-title {
    display: flex;
    align-items: center;
    justify-content: space-between;
    height: 20px;
    padding: 0 7px 0 4px;
    background-color: #3f5590;
    color: #c7d2ee;
}

.sol-toolbar {
    display: flex;
    align-items: center;
    height: 30px;
    padding-left: 7px;
    background-color: #cbd6f0;
}

.s-sep1 { margin-left: 5px; }
.s-clock { margin-left: 9px; }
.s-caret { margin-left: 6px; }
.s-sync { margin-left: 7px; }
.s-refresh { margin-left: 8px; }
.s-collapse { margin-left: 7px; }
.s-copy { margin-left: 8px; }
.s-sep2 { margin-left: 7px; }
.s-code { margin-left: 10px; }
.s-wrench { margin-left: 8px; }

.s-active {
    display: flex;
    align-items: center;
    justify-content: center;
    width: 22px;
    height: 22px;
    margin-left: 4px;
    background-color: #f6d488;
    border: 1px solid #d9b060;
}

.sol-search {
    display: flex;
    align-items: center;
    height: 22px;
    margin: 1px 4px 0 2px;
    padding: 0 3px 0 5px;
    background-color: #ffffff;
    border: 1px solid #aab4cc;
    color: #8a8f98;
}

.sol-search svg {
    margin-left: auto;
}

.search-caret {
    margin-left: 8px;
}

.sol-tree {
    flex: 1;
    padding-top: 2px;
}

.tree-row {
    display: flex;
    align-items: center;
    gap: 5px;
    height: 20px;
    color: #3b3f4a;
}

.tree-row.root {
    padding-left: 14px;
    font-size: 11.85px;
}

.tree-row.project {
    padding-left: 12px;
}

.tree-row.project .exp {
    margin-right: 5px;
}

.tree-row.project b {
    margin-left: 2px;
}

.tree-row.child {
    padding-left: 27px;
}

.tree-row.child .exp, .exp-none {
    width: 8px;
    margin-right: 7px;
}

.tree-row.child svg + span {
    margin-left: 2px;
}

.cs-icon + span {
    margin-left: 1px;
}

.tree-row.selected {
    background-color: #ecedf1;
}

.cs-icon {
    width: 15px;
    color: #3a9a5a;
    font-size: 11px;
}

.sol-tabs {
    display: flex;
    height: 18px;
    background-color: #5a6899;
}

.sol-tab {
    padding: 0 5px;
    background-color: #3f5590;
    color: #c7d2ee;
    line-height: 18px;
}

.sol-tab.active {
    padding-left: 5px;
    background-color: #f7fafd;
    color: #3b3f4a;
}

/* status bar */
.statusbar {
    display: flex;
    align-items: center;
    flex: none;
    height: 24px;
    padding-left: 3px;
    background-color: #3f5391;
    color: #d5ddf2;
}

.status-ready {
    margin-left: 7px;
}

.status-right {
    display: flex;
    align-items: center;
    gap: 8px;
    margin-left: auto;
    padding-right: 16px;
}

.status-source {
    font-size: 12.2px;
}

.status-select {
    font-size: 11.5px;
}

.status-repo {
    margin-left: 15px;
}

.status-bell {
    position: relative;
    margin-left: 13px;
    height: 15px;
}

.bell-badge {
    position: absolute;
    right: -3px;
    bottom: 0;
    width: 9px;
    height: 9px;
    background-color: #e03a2e;
    border-radius: 50%;
}

/* signature help */
.signature {
    position: absolute;
    left: 225px;
    top: 431px;
    display: flex;
    width: 908px;
    height: 50px;
    background-color: #f2f6fb;
    border: 1px solid #cfd2d6;
    box-shadow: 0 1px 3px rgba(0, 0, 0, 0.15);
    font-size: 10.83px;
    line-height: 15.5px;
}

.sig-counter {
    display: flex;
    gap: 4px;
    flex: none;
    width: 80px;
    padding: 1px 0 0 9px;
}

.sig-text {
    padding-top: 1px;
}

.sig-type {
    color: #6f9fb0;
}

.sig-param {
    color: #20207a;
}

.sig-arg {
    font-style: italic;
}

/* completion list */
.completion {
    position: absolute;
    left: 457px;
    top: 483px;
    width: 306px;
    height: 182px;
    background-color: #f7fafd;
    border: 1px solid #e2e0c8;
}

.completion-main {
    display: flex;
    height: 157px;
}

.completion-list {
    flex: 1;
    padding-top: 1px;
}

.comp-item {
    display: flex;
    align-items: center;
    height: 18.5px;
    padding-left: 1px;
    font-size: 11px;
}

.comp-item .star {
    margin: 0 3px 0 4px;
    font-size: 9px;
    color: #222222;
}

.comp-label.boxed {
    flex: 1;
}

.comp-item.first {
    background: linear-gradient(#ffffff, #ffffff) 18px 0 / 100% 100% no-repeat;
    box-shadow: inset 0 -1px 0 #e2e3e6;
}

.snippet {
    width: 12px;
    height: 12px;
    margin: 0 4px 0 2px;
    background-color: #eceef2;
    border: 1px solid #6d7484;
    border-radius: 1px;
}

.completion-scroll {
    position: relative;
    width: 16px;
    background-color: #f1f2f4;
}

.scroll-up, .scroll-down {
    position: absolute;
    left: 5px;
    width: 0;
    height: 0;
    border-left: 3px solid transparent;
    border-right: 3px solid transparent;
}

.scroll-up {
    top: 5px;
    border-bottom: 3px solid #8a8f98;
}

.scroll-down {
    bottom: 6px;
    border-top: 3px solid #8a8f98;
}

.scroll-thumb {
    position: absolute;
    left: 3px;
    top: 12px;
    width: 9px;
    height: 10px;
    background-color: #d0d3d8;
}

.completion-filters {
    display: flex;
    align-items: center;
    gap: 9.2px;
    height: 23px;
    padding-left: 5px;
    background:
        linear-gradient(#e2e0c8, #e2e0c8) 26px 0 / 1px 100% no-repeat,
        #f7fafd;
    border-top: 1px solid #e2e0c8;
}

.filter-expand {
    margin-right: 3px;
}

.filter-brace {
    width: 16px;
    text-align: center;
    font-size: 11px;
}
```
